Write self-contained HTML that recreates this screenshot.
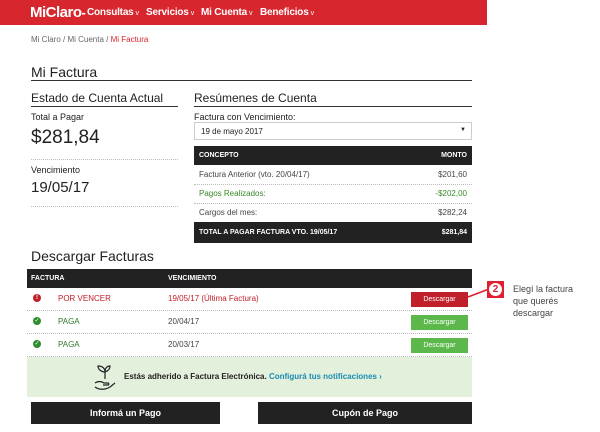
<!DOCTYPE html>
<html><head><meta charset="utf-8"><style>
*{margin:0;padding:0;box-sizing:border-box}
body{width:600px;height:432px;background:#fff;font-family:"Liberation Sans",sans-serif;position:relative;overflow:hidden;color:#222}
.a{position:absolute;white-space:nowrap}
.hdr{left:0;top:0;width:487px;height:25px;background:#d8262e}
.nav{color:#fff;font-size:10px;top:7px;font-weight:bold;letter-spacing:-0.2px}
.nav i{font-style:normal;font-size:7px;font-weight:normal;margin-left:2px}
.dot{border-top:1px dotted #bbb;height:0}
.row{font-size:8px;color:#444}
.btn{font-size:7px;color:#fff;text-align:center;line-height:15px;height:15px;width:57px;left:411px}
</style></head><body>
<div class="a hdr"></div>
<div class="a" style="left:30px;top:4px;color:#fff;font-size:15px;font-weight:bold;letter-spacing:-0.5px">MiClaro<span style="font-size:13px">-</span></div>
<div class="a nav" style="left:87px">Consultas<i>v</i></div>
<div class="a nav" style="left:146px">Servicios<i>v</i></div>
<div class="a nav" style="left:201px">Mi Cuenta<i>v</i></div>
<div class="a nav" style="left:260px">Beneficios<i>v</i></div>
<div class="a" style="left:31px;top:35px;font-size:8px;color:#666">Mi Claro / Mi Cuenta / <span style="color:#d8262e">Mi Factura</span></div>
<div class="a" style="left:31px;top:64px;font-size:14px;color:#222">Mi Factura</div>
<div class="a" style="left:31px;top:80px;width:441px;height:1px;background:#333"></div>
<div class="a" style="left:31px;top:91px;font-size:12px">Estado de Cuenta Actual</div>
<div class="a" style="left:31px;top:106px;width:147px;height:1px;background:#333"></div>
<div class="a" style="left:31px;top:112px;font-size:9px">Total a Pagar</div>
<div class="a" style="left:31px;top:127px;font-size:19px">$281,84</div>
<div class="a dot" style="left:31px;top:159px;width:147px"></div>
<div class="a" style="left:31px;top:165px;font-size:9px">Vencimiento</div>
<div class="a" style="left:31px;top:179px;font-size:15px">19/05/17</div>
<div class="a dot" style="left:31px;top:206px;width:147px"></div>
<div class="a" style="left:194px;top:91px;font-size:12px">Resúmenes de Cuenta</div>
<div class="a" style="left:194px;top:106px;width:278px;height:1px;background:#333"></div>
<div class="a" style="left:194px;top:112px;font-size:9px">Factura con Vencimiento:</div>
<div class="a" style="left:194px;top:122px;width:278px;height:18px;border:1px solid #ccc;font-size:8px;padding:4px 6px">19 de mayo 2017<span style="position:absolute;right:5px;top:4px;font-size:6px">▼</span></div>
<div class="a" style="left:194px;top:146px;width:278px;height:19px;background:#222;color:#fff;font-size:7px;font-weight:bold;padding:6px 5px">CONCEPTO<span style="float:right">MONTO</span></div>
<div class="a row" style="left:199px;top:170px;width:268px">Factura Anterior (vto. 20/04/17)<span style="float:right">$201,60</span></div>
<div class="a dot" style="left:194px;top:184px;width:278px"></div>
<div class="a row" style="left:199px;top:189px;width:268px;color:#3a8a2a">Pagos Realizados:<span style="float:right">-$202,00</span></div>
<div class="a dot" style="left:194px;top:203px;width:278px"></div>
<div class="a row" style="left:199px;top:208px;width:268px">Cargos del mes:<span style="float:right">$282,24</span></div>
<div class="a" style="left:194px;top:222px;width:278px;height:21px;background:#222;color:#fff;font-size:7px;font-weight:bold;padding:7px 5px">TOTAL A PAGAR FACTURA VTO. 19/05/17<span style="float:right">$281,84</span></div>
<div class="a" style="left:31px;top:248px;font-size:14px">Descargar Facturas</div>
<div class="a" style="left:27px;top:269px;width:445px;height:19px;background:#222;color:#fff;font-size:7px;font-weight:bold;padding:6px 4px">FACTURA<span style="position:absolute;left:141px">VENCIMIENTO</span></div>
<div class="a" style="left:33px;top:294px;width:8px;height:8px;border-radius:50%;background:#c0202a;color:#fff;font-size:6px;font-weight:bold;text-align:center;line-height:8px">!</div>
<div class="a row" style="left:58px;top:294px;color:#c0202a">POR VENCER</div>
<div class="a row" style="left:168px;top:294px;color:#c0202a">19/05/17 (Última Factura)</div>
<div class="a btn" style="top:292px;background:#c0202a">Descargar</div>
<div class="a dot" style="left:27px;top:310px;width:445px"></div>
<div class="a" style="left:33px;top:317px;width:8px;height:8px;border-radius:50%;background:#2e8b2e;color:#fff;font-size:6px;text-align:center;line-height:8px">✓</div>
<div class="a row" style="left:58px;top:317px;color:#2e7a2e">PAGA</div>
<div class="a row" style="left:168px;top:317px">20/04/17</div>
<div class="a btn" style="top:315px;background:#5cb84a">Descargar</div>
<div class="a dot" style="left:27px;top:333px;width:445px"></div>
<div class="a" style="left:33px;top:340px;width:8px;height:8px;border-radius:50%;background:#2e8b2e;color:#fff;font-size:6px;text-align:center;line-height:8px">✓</div>
<div class="a row" style="left:58px;top:340px;color:#2e7a2e">PAGA</div>
<div class="a row" style="left:168px;top:340px">20/03/17</div>
<div class="a btn" style="top:338px;background:#5cb84a">Descargar</div>
<div class="a dot" style="left:27px;top:356px;width:445px"></div>
<div class="a" style="left:27px;top:357px;width:445px;height:40px;background:#e3f0dc"></div>
<svg class="a" style="left:92px;top:363px" width="26" height="28" viewBox="0 0 26 28" fill="none" stroke="#222" stroke-width="1.2"><path d="M13 16V8M13 9C9 9 6 6 6 3c4 0 7 2 7 6M13 9c3-1 5-3 5-6-3 0-5 2-5 6"/><path d="M3 20c3-2 6-2 9 0h4c1 0 1 2 0 2h-5M3 24c4 3 10 3 15 0l5-4"/></svg>
<div class="a" style="left:124px;top:372px;font-size:8px;font-weight:bold">Estás adherido a Factura Electrónica. <span style="color:#1a8ab0">Configurá tus notificaciones ›</span></div>
<div class="a" style="left:31px;top:402px;width:189px;height:22px;background:#222;color:#fff;font-size:9px;font-weight:bold;text-align:center;line-height:22px">Informá un Pago</div>
<div class="a" style="left:258px;top:402px;width:214px;height:22px;background:#222;color:#fff;font-size:9px;font-weight:bold;text-align:center;line-height:22px">Cupón de Pago</div>
<svg class="a" style="left:467px;top:280px" width="40" height="22"><path d="M1 17L22 9" stroke="#e02030" stroke-width="1.5"/></svg>
<div class="a" style="left:487px;top:281px;width:17px;height:17px;background:#e02030;border:2px solid #e02030"><div style="width:13px;height:13px;border-radius:50%;background:#fff;color:#e02030;font-size:10px;font-weight:bold;text-align:center;line-height:13px">2</div></div>
<div class="a" style="left:513px;top:283px;font-size:9px;color:#444;line-height:12px">Elegí la factura<br>que querés<br>descargar</div>
</body></html>
